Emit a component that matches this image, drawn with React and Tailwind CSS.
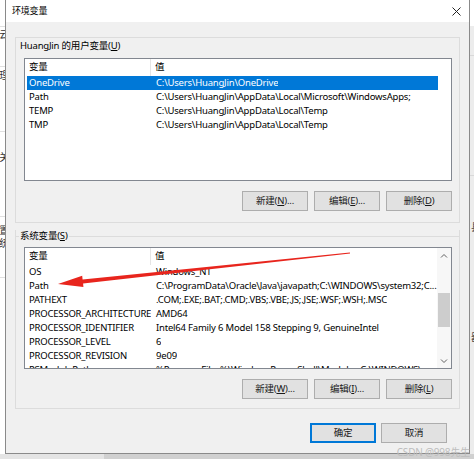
import React from 'react';

const userVars = [
  { name: 'OneDrive', value: 'C:\\Users\\HuangJin\\OneDrive', selected: true },
  { name: 'Path', value: 'C:\\Users\\HuangJin\\AppData\\Local\\Microsoft\\WindowsApps;' },
  { name: 'TEMP', value: 'C:\\Users\\HuangJin\\AppData\\Local\\Temp' },
  { name: 'TMP', value: 'C:\\Users\\HuangJin\\AppData\\Local\\Temp' },
];

const systemVars = [
  { name: 'OS', value: 'Windows_NT' },
  { name: 'Path', value: 'C:\\ProgramData\\Oracle\\Java\\javapath;C:\\WINDOWS\\system32;C...' },
  { name: 'PATHEXT', value: '.COM;.EXE;.BAT;.CMD;.VBS;.VBE;.JS;.JSE;.WSF;.WSH;.MSC' },
  { name: 'PROCESSOR_ARCHITECTURE', value: 'AMD64' },
  { name: 'PROCESSOR_IDENTIFIER', value: 'Intel64 Family 6 Model 158 Stepping 9, GenuineIntel' },
  { name: 'PROCESSOR_LEVEL', value: '6' },
  { name: 'PROCESSOR_REVISION', value: '9e09' },
  { name: 'PSModulePath', value: '%ProgramFiles%\\WindowsPowerShell\\Modules;C:\\WINDOWS\\...' },
];

const WinButton = ({ label, hotkey, suffix = '', primary = false }) => (
  <div
    className={`w-[66px] h-[20px] flex items-center justify-center text-[9.5px] text-[#1a1a1a] bg-[#e1e1e1] border ${
      primary ? 'border-[#0078d7] border-2' : 'border-[#adadad]'
    }`}
  >
    {label}
    {hotkey && (
      <>
        (<span className="underline">{hotkey}</span>)
      </>
    )}
    {suffix}
  </div>
);

const VarRow = ({ item }) => (
  <div
    className={`ml-[2px] w-[411px] h-[14px] flex items-center shrink-0 whitespace-nowrap ${
      item.selected ? 'bg-[#0078d7] text-white' : 'text-black'
    }`}
  >
    <div className="w-[124px] shrink-0 pl-[2px] overflow-hidden">{item.name}</div>
    <div className="pl-[5px] overflow-hidden">{item.value}</div>
  </div>
);

const VarList = ({ items, height, scroll = false }) => (
  <div className={`bg-white border border-[#828790] flex text-[9.5px] ${height} overflow-hidden`}>
    <div className="flex-1 flex flex-col overflow-hidden">
      <div className="h-[17px] flex items-center shrink-0">
        <div className="w-[126px] pl-[4px] border-r border-[#e5e5e5] h-full flex items-center">变量</div>
        <div className="pl-[4px]">值</div>
      </div>
      {items.map((item) => (
        <VarRow key={item.name} item={item} />
      ))}
    </div>
    {scroll && (
      <div className="w-[14px] flex flex-col bg-[#f7f7f7] shrink-0">
        <div className="h-[14px] flex items-center justify-center">
          <svg width="8" height="5" viewBox="0 0 8 5">
            <path d="M1 4.5 L4 1.5 L7 4.5" stroke="#606060" strokeWidth="1" fill="none" />
          </svg>
        </div>
        <div className="flex-1 pt-[31px] px-[1px]">
          <div className="h-[34px] bg-[#cdcdcd]" />
        </div>
        <div className="h-[14px] flex items-center justify-center">
          <svg width="8" height="5" viewBox="0 0 8 5">
            <path d="M1 0.5 L4 3.5 L7 0.5" stroke="#606060" strokeWidth="1" fill="none" />
          </svg>
        </div>
      </div>
    )}
  </div>
);

const LeftStrip = () => (
  <div className="w-[5px] h-full bg-white flex flex-col overflow-hidden text-[10px] text-[#333] leading-none">
    <div className="h-[27px] border-b border-[#e0e0e0]" />
    <div className="flex justify-end mt-[2px]">
      <span className="-mr-[4px]">云</span>
    </div>
    <div className="h-[28px] border-b border-[#e0e0e0]" />
    <div className="flex justify-end mt-[3px]">
      <span className="-mr-[4px]">理</span>
    </div>
    <div className="h-[52px] border-b border-[#e0e0e0]" />
    <div className="flex justify-end mt-[20px]">
      <span className="-mr-[4px]">关</span>
    </div>
    <div className="h-[55px] border-b border-[#e0e0e0]" />
    <div className="flex justify-end mt-[8px]">
      <span className="-mr-[4px]">置</span>
    </div>
    <div className="flex justify-end mt-[3px]">
      <span className="-mr-[4px]">统</span>
    </div>
    <div className="h-[30px] border-b border-[#e0e0e0]" />
  </div>
);

const RightStrip = () => (
  <div className="w-[4px] h-full bg-[#ececec] flex flex-col overflow-hidden text-[10px] text-[#444] leading-none">
    <div className="h-[26px] bg-white" />
    <div className="h-[30px] border-b border-[#d8d8d8]" />
    <div className="h-[120px] border-b border-[#d8d8d8]" />
    <div className="mt-[46px] pl-[1px]">县</div>
    <div className="mt-[100px] pl-[1px]">器</div>
  </div>
);

export default function App() {
  return (
    <div className="w-[474px] h-[459px] relative overflow-hidden bg-[#dcdcdc] tracking-[-0.2px] font-['Noto_Sans','Noto_Sans_CJK_SC',sans-serif]">
      <div className="flex h-[454px]">
        <LeftStrip />
        <div className="w-[465px] h-full border-x border-b border-[#8a8a8a] bg-[#f0f0f0] flex flex-col">
          {/* title bar */}
          <div className="h-[22px] bg-white flex items-center justify-between pl-[6px] pr-[8px] shrink-0">
            <span className="text-[9px] text-black">环境变量</span>
            <svg width="9" height="9" viewBox="0 0 9 9">
              <path d="M0.5 0.5 L8.5 8.5 M8.5 0.5 L0.5 8.5" stroke="#222" strokeWidth="1" />
            </svg>
          </div>

          <div className="flex-1 flex flex-col px-[9px]">
            {/* user variables */}
            <div className="mt-[15px] border border-[#dcdcdc] flex flex-col pl-[8px] pr-[7px] pt-[2px] pb-[11px]">
              <div className="h-[12px] flex items-center text-[9.5px] text-black -ml-[4px]">
                HuangJin 的用户变量(<span className="underline">U</span>)
              </div>
              <div className="mt-[6px]">
                <VarList items={userVars} height="h-[123px]" />
              </div>
              <div className="mt-[10px] flex justify-end gap-[6px]">
                <WinButton label="新建" hotkey="N" suffix="..." />
                <WinButton label="编辑" hotkey="E" suffix="..." />
                <WinButton label="删除" hotkey="D" />
              </div>
            </div>

            {/* system variables */}
            <div className="mt-[7px] flex flex-col">
              <div className="h-[12px] flex items-center">
                <div className="w-[4px] h-[12px] border-l border-[#dcdcdc] flex items-center">
                  <div className="w-full h-px bg-[#dcdcdc]" />
                </div>
                <span className="text-[9.5px] text-black px-[1px]">
                  系统变量(<span className="underline">S</span>)
                </span>
                <div className="flex-1 h-[12px] border-r border-[#dcdcdc] flex items-center">
                  <div className="w-full h-px bg-[#dcdcdc]" />
                </div>
              </div>
              <div className="border-x border-b border-[#dcdcdc] flex flex-col pl-[8px] pr-[7px] pt-[5px] pb-[9px]">
                <VarList items={systemVars} height="h-[122px]" scroll />
                <div className="mt-[10px] flex justify-end gap-[6px]">
                  <WinButton label="新建" hotkey="W" suffix="..." />
                  <WinButton label="编辑" hotkey="I" suffix="..." />
                  <WinButton label="删除" hotkey="L" />
                </div>
              </div>
            </div>

            {/* dialog buttons */}
            <div className="mt-[14px] flex justify-end gap-[5px] pr-[13px]">
              <WinButton label="确定" primary />
              <WinButton label="取消" />
            </div>
          </div>
        </div>
        <RightStrip />
      </div>
      <div className="h-[5px] flex">
        <div className="w-[104px] bg-[#e4e4e4]" />
        <div className="flex-1 bg-[#d0d0d0]" />
      </div>

      {/* red annotation arrow */}
      <svg className="absolute inset-0 pointer-events-none" width="474" height="459" viewBox="0 0 474 459">
        <polygon
          points="349.9,252.4 82.6,279.4 82.2,275.8 58,284 83.4,286.9 83.1,283.4 350.1,253.6"
          fill="#e8251d"
        />
      </svg>

      {/* watermark */}
      <div className="absolute right-[4px] bottom-[2px] text-[10px] text-[#bdbdbd] leading-none">
        CSDN @998先生
      </div>
    </div>
  );
}
